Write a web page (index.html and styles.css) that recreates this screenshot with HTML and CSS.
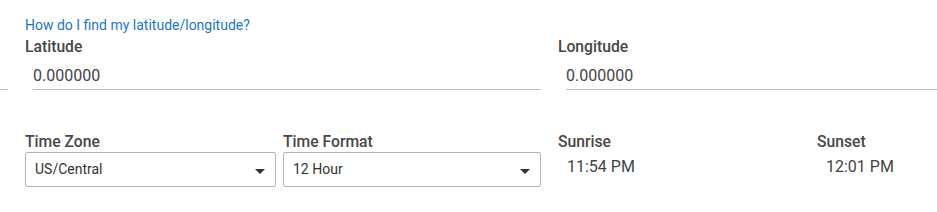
FILE: index.html
```html
<!DOCTYPE html>
<html lang="en">
<head>
	<meta charset="UTF-8">
	<title>Location</title>
	<link rel="stylesheet" href="styles.css">
</head>
<body>
	<div class="page">
		<a href="javascript:;" class="help">How do I find my latitude/longitude?</a>
		<div class="coords">
			<div class="stub"></div>
			<div class="field lat">
				<label>Latitude</label>
				<input type="text" value="0.000000">
			</div>
			<div class="field lng">
				<label>Longitude</label>
				<input type="text" value="0.000000">
			</div>
		</div>
		<div class="times">
			<div class="col">
				<label>Time Zone</label>
				<div class="select tz">
					<span>US/Central</span>
					<svg class="caret" width="10" height="5" viewBox="0 0 10 5"><path d="M0 0h10L5 5z" fill="#333"/></svg>
				</div>
			</div>
			<div class="col">
				<label>Time Format</label>
				<div class="select fmt">
					<span>12 Hour</span>
					<svg class="caret" width="10" height="5" viewBox="0 0 10 5"><path d="M0 0h10L5 5z" fill="#333"/></svg>
				</div>
			</div>
			<div class="col">
				<label>Sunrise</label>
				<div class="value">11:54 PM</div>
			</div>
			<div class="col">
				<label>Sunset</label>
				<div class="value">12:01 PM</div>
			</div>
		</div>
	</div>
</body>
</html>
```

FILE: styles.css
```css
html,body{
	margin: 0;padding: 0;background: #fff;overflow: hidden;
	font-family: Roboto, "Liberation Sans", sans-serif;color: #444;
}
.page{
	width: 937px;padding-top: 17px;overflow: hidden;
}
.help{
	display: block;margin-left: 25px;
	font-size: 14px;line-height: 16px;color: #1b76c6;text-decoration: none;
}
label{
	display: block;
	font-size: 15.7px;line-height: 18px;font-weight: 500;color: #474747;
}
.coords{
	display: flex;align-items: flex-end;margin-top: 5px;
}
.stub{
	flex-shrink: 0;
	width: 8px;margin-right: 17px;border-bottom: 1px solid #bdbdbd;
}
.field input{
	display: block;box-sizing: content-box;
	height: 27px;margin: 6px 0 0 8px;padding: 0;
	border: 0;border-bottom: 1px solid #bdbdbd;outline: none;
	font-family: inherit;font-size: 16px;color: #444;background: transparent;
}
.lat{ flex-shrink: 0;width: 516px;margin-right: 17px; }
.lat input{ width: 508px; }
.lng{ flex: 1;min-width: 0; }
.lng input{ width: 380px; }
.times{
	display: grid;grid-template-columns: 258px 275px 259px 1fr;
	margin: 43px 0 0 25px;
}
.select{
	position: relative;box-sizing: border-box;
	height: 35px;margin-top: 1px;padding-left: 9px;
	border: 1px solid #b4b4b4;border-radius: 2px;
	font-size: 14px;line-height: 33px;color: #333;
}
.tz{ width: 251px; }
.fmt{ width: 258px; }
.caret{
	position: absolute;right: 10px;top: 16px;
}
.value{
	margin-top: 0;padding-left: 9px;
	font-size: 16px;line-height: 31px;color: #444;
}
```
